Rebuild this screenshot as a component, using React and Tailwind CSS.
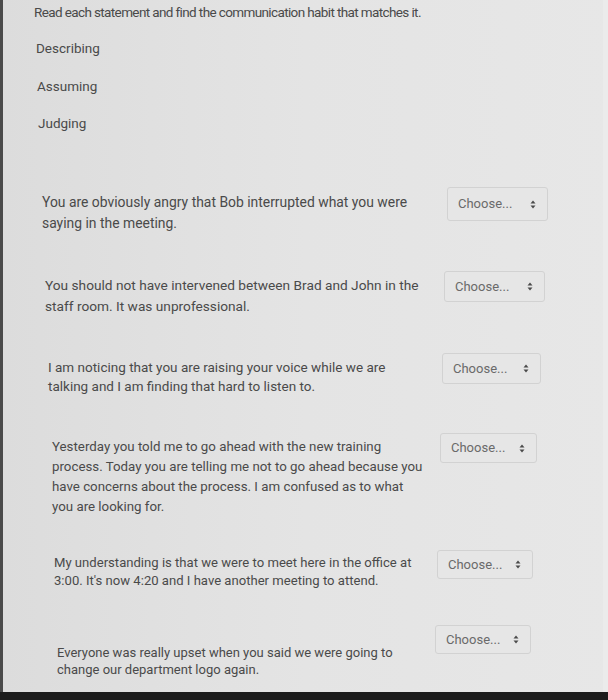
import React from "react";

function Sel({ w, h }) {
  return (
    <div
      className="flex shrink-0 items-center justify-between rounded-[3px] border border-[#d2d2d2] bg-[#e6e6e6] pl-[10px] pr-[11px] text-[13px] text-[#6a6a6a]"
      style={{ width: w, height: h }}
    >
      <span>Choose...</span>
      <svg width="6" height="9" viewBox="0 0 6 9">
        <path d="M3 0.5 L5.5 3.5 L0.5 3.5 Z" fill="#4a4a4a" />
        <path d="M3 8.5 L5.5 5.5 L0.5 5.5 Z" fill="#4a4a4a" />
      </svg>
    </div>
  );
}

function Row({ mt, pl, tw, off, lead, fs, lines, selW, selH }) {
  return (
    <div className="flex items-start" style={{ marginTop: mt, paddingLeft: pl }}>
      <div
        className="shrink-0 text-[#4a4a4a]"
        style={{ width: tw, marginTop: off, lineHeight: lead + "px", fontSize: fs }}
      >
        {lines.map((l, i) => (
          <div key={i} className="whitespace-nowrap">{l}</div>
        ))}
      </div>
      <Sel w={selW} h={selH} />
    </div>
  );
}

export default function App() {
  return (
    <div
      className="relative h-[700px] w-[608px] overflow-hidden bg-linear-to-r from-[#dcdcdc] via-[#e4e4e4] to-[#e7e7e7] text-[#4a4a4a]"
      style={{ fontFamily: "Roboto, 'Liberation Sans', sans-serif" }}
    >
      <div className="absolute left-0 top-0 h-full w-[3px] bg-[#4a4a4a]" />
      <div className="absolute right-0 top-0 h-full w-[5px] bg-[#ebebeb]" />
      <div className="flex flex-col pt-[2px]">
        <div className="pl-[34px] text-[13.5px] leading-[20px] tracking-[-0.62px]">
          Read each statement and find the communication habit that matches it.
        </div>
        <div className="mt-[16px] pl-[36px] text-[13.5px] leading-[20px]">Describing</div>
        <div className="mt-[18px] pl-[37px] text-[13.5px] leading-[20px]">Assuming</div>
        <div className="mt-[17px] pl-[38px] text-[13.5px] leading-[20px]">Judging</div>

        <Row mt={54} pl={42} tw={405} off={5} lead={21} fs={13.9} selW={101} selH={34}
          lines={["You are obviously angry that Bob interrupted what you were", "saying in the meeting."]} />
        <Row mt={37} pl={45} tw={399} off={4} lead={21} fs={13.7} selW={101} selH={31}
          lines={["You should not have intervened between Brad and John in the", "staff room. It was unprofessional."]} />
        <Row mt={36} pl={48} tw={394} off={5} lead={19} fs={13.5} selW={99} selH={31}
          lines={["I am noticing that you are raising your voice while we are", "talking and I am finding that hard to listen to."]} />
        <Row mt={37} pl={52} tw={388} off={4} lead={20} fs={13.3} selW={97} selH={30}
          lines={[
            "Yesterday you told me to go ahead with the new training",
            "process. Today you are telling me not to go ahead because you",
            "have concerns about the process. I am confused as to what",
            "you are looking for.",
          ]} />
        <Row mt={33} pl={54} tw={383} off={4} lead={18} fs={13.1} selW={96} selH={29}
          lines={["My understanding is that we were to meet here in the office at", "3:00. It's now 4:20 and I have another meeting to attend."]} />
        <Row mt={35} pl={57} tw={378} off={19} lead={17} fs={13} selW={96} selH={29}
          lines={["Everyone was really upset when you said we were going to", "change our department logo again."]} />
      </div>
      <div className="absolute bottom-0 left-0 h-[8px] w-full bg-[#1c1c1c]" />
    </div>
  );
}
